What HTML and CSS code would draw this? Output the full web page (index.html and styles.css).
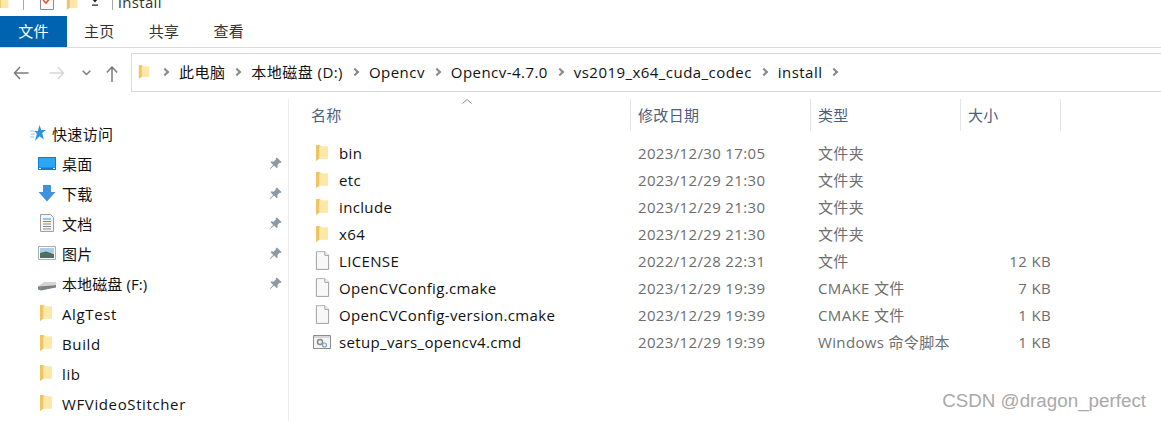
FILE: index.html
```html
<!DOCTYPE html>
<html lang="zh-CN">
<head>
   <meta charset="UTF-8">
   <title>install</title>
   <link rel="stylesheet" href="styles.css">
</head>
<body>
   <svg class="defs" width="0" height="0">
      <defs>
         <symbol id="folder" viewBox="0 0 14 18">
            <path d="M1 1h4l1 1.500h7v12H4L1 17z" fill="#f7dc8a"/>
            <path d="M1 1h3.500v13.500L1 17z" fill="#eec566"/>
            <path d="M4.500 3h8.500v11.500H4.500z" fill="#fde8a8"/>
         </symbol>
         <symbol id="page" viewBox="0 0 16 20">
            <path d="M1.500.5h9l4 4v15h-13z" fill="#f8f8f8" stroke="#9a9a9a"/>
            <path d="M10.500.5v4h4" fill="#fff" stroke="#9a9a9a"/>
         </symbol>
         <symbol id="pin" viewBox="0 0 14 14">
            <path d="M8.500.5l5 5-1 1-1-.3-2.500 2.500.3 2.300-1 1-2.800-2.800L1.500 13 1 12.500l3.500-4L1.700 5.700l1-1 2.300.3L7.500 2.500 7.200 1.500z" fill="#8d99a3"/>
         </symbol>
      </defs>
   </svg>

   <div class="titlebar">
      <svg class="tb-folder" width="12" height="16" viewBox="0 0 12 16"><use href="#folder"/></svg>
      <span class="tb-sep"></span>
      <svg class="tb-check" width="16" height="16" viewBox="0 0 16 16"><path d="M1.500 0v14.500h13V0" fill="#fafafa" stroke="#8c8c8c"/><path d="M4 5l3 3 5-6" fill="none" stroke="#e2562a" stroke-width="1.600"/></svg>
      <svg class="tb-folder2" width="12" height="16" viewBox="0 0 12 16"><use href="#folder"/></svg>
      <svg class="tb-drop" width="8" height="8" viewBox="0 0 8 8"><path d="M1 0h6L4 3.500z M1 5.500h6v1.200H1z" fill="#222"/></svg>
      <span class="tb-sep"></span>
      <span class="tb-title">install</span>
   </div>

   <div class="tabs">
      <div class="tab tab-file">文件</div>
      <div class="tab">主页</div>
      <div class="tab">共享</div>
      <div class="tab">查看</div>
   </div>

   <div class="nav">
      <div class="nav-btns">
         <svg class="btn-back" width="16" height="14" viewBox="0 0 16 14"><path d="M7 1L1.500 7 7 13M2 7h13.500" fill="none" stroke="#7c7c7c" stroke-width="1.500"/></svg>
         <svg class="btn-fwd" width="16" height="14" viewBox="0 0 16 14"><path d="M9 1l5.500 6L9 13M14 7H.5" fill="none" stroke="#d6d6d6" stroke-width="1.500"/></svg>
         <svg class="btn-drop" width="9" height="6" viewBox="0 0 9 6"><path d="M.7.7L4.500 4.500 8.300.7" fill="none" stroke="#7c7c7c" stroke-width="1.500"/></svg>
         <svg class="btn-up" width="12" height="16" viewBox="0 0 12 16"><path d="M.8 6.500L6 1l5.200 5.500M6 1.500V16" fill="none" stroke="#7c7c7c" stroke-width="1.500"/></svg>
      </div>
      <div class="address">
         <svg class="addr-folder" width="12" height="18" viewBox="0 0 14 18"><use href="#folder"/></svg>
         <span class="crumb-sep first"></span><span class="crumb">此电脑</span>
         <span class="crumb-sep"></span><span class="crumb">本地磁盘 (D:)</span>
         <span class="crumb-sep"></span><span class="crumb">Opencv</span>
         <span class="crumb-sep"></span><span class="crumb">Opencv-4.7.0</span>
         <span class="crumb-sep"></span><span class="crumb">vs2019_x64_cuda_codec</span>
         <span class="crumb-sep"></span><span class="crumb">install</span>
         <span class="crumb-sep"></span>
      </div>
   </div>

   <div class="main">
      <div class="sidebar">
         <div class="side-row side-head">
            <svg width="16" height="16" viewBox="0 0 16 16"><path d="M9.500 0l1.800 5H16l-3.800 3 1.500 6.500-4.200-3.200L5 16l1.900-7.500L4 6h3.800z" fill="#2b94dc"/><path d="M0 6h4M1 9h4M0 12h4" stroke="#8ec8ee"/></svg>
            <span>快速访问</span>
         </div>
         <div class="side-row">
            <svg class="side-icon" width="18" height="13" viewBox="0 0 18 13"><path d="M0 0h18v13H0z" fill="#0b7fd6"/><path d="M1 1h16v9.500H1z" fill="#2ba6f2"/><path d="M1 11.500h2M15 11.500h2" stroke="#fff"/></svg>
            <span class="side-name">桌面</span>
            <svg class="pin" width="13" height="13"><use href="#pin"/></svg>
         </div>
         <div class="side-row">
            <svg class="side-icon" width="18" height="17" viewBox="0 0 18 17"><path d="M5 0h8v7h4.500L9 16.500.5 7H5z" fill="#3f92dd"/></svg>
            <span class="side-name">下载</span>
            <svg class="pin" width="13" height="13"><use href="#pin"/></svg>
         </div>
         <div class="side-row">
            <svg class="side-icon" width="18" height="18" viewBox="0 0 18 18"><path d="M2.500.5h10l3 3v14h-13z" fill="#f4f6f8" stroke="#a0a0a0"/><path d="M5 5h8M5 7.500h8" stroke="#3d9ad8"/><path d="M5 10h8M5 12.500h8M5 15h8" stroke="#8a8a8a"/></svg>
            <span class="side-name">文档</span>
            <svg class="pin" width="13" height="13"><use href="#pin"/></svg>
         </div>
         <div class="side-row">
            <svg class="side-icon" width="18" height="14" viewBox="0 0 18 14"><path d="M.5.500h17v13H.5z" fill="#fff" stroke="#adadad"/><path d="M2 2h14v5H2z" fill="#a8cfe8"/><path d="M2 7l6-1.500L16 8v4H2z" fill="#4f6f60"/></svg>
            <span class="side-name">图片</span>
            <svg class="pin" width="13" height="13"><use href="#pin"/></svg>
         </div>
         <div class="side-row">
            <svg class="side-icon disk" width="18" height="10" viewBox="0 0 18 10"><path d="M0 5.500L6 1h12v3.500L3 6.500z" fill="#d4d4d4"/><path d="M0 5.500l15-1 3-.5v2.500L3 9.500 0 8.500z" fill="#7f7f7f"/><path d="M1.500 7h2" stroke="#4fd04f"/></svg>
            <span class="side-name side-disk">本地磁盘 (F:)</span>
            <svg class="pin" width="13" height="13"><use href="#pin"/></svg>
         </div>
         <div class="side-row">
            <svg class="side-icon" width="14" height="18"><use href="#folder"/></svg>
            <span class="side-name side-latin">AlgTest</span>
         </div>
         <div class="side-row">
            <svg class="side-icon" width="14" height="18"><use href="#folder"/></svg>
            <span class="side-name side-latin">Build</span>
         </div>
         <div class="side-row">
            <svg class="side-icon" width="14" height="18"><use href="#folder"/></svg>
            <span class="side-name side-latin">lib</span>
         </div>
         <div class="side-row">
            <svg class="side-icon" width="14" height="18"><use href="#folder"/></svg>
            <span class="side-name side-latin">WFVideoStitcher</span>
         </div>
      </div>

      <div class="files">
         <svg class="sort-caret" width="10" height="5" viewBox="0 0 10 5"><path d="M.5 4.500L5 .5l4.500 4" fill="none" stroke="#8a8a8a"/></svg>
         <div class="file-grid">
            <div class="col-head col-first">名称</div>
            <div class="col-head">修改日期</div>
            <div class="col-head">类型</div>
            <div class="col-head col-last">大小</div>

            <div class="name"><svg class="file-icon" width="14" height="18"><use href="#folder"/></svg>bin</div>
            <div class="cell">2023/12/30 17:05</div><div class="cell">文件夹</div><div class="cell size"></div>

            <div class="name"><svg class="file-icon" width="14" height="18"><use href="#folder"/></svg>etc</div>
            <div class="cell">2023/12/29 21:30</div><div class="cell">文件夹</div><div class="cell size"></div>

            <div class="name"><svg class="file-icon" width="14" height="18"><use href="#folder"/></svg>include</div>
            <div class="cell">2023/12/29 21:30</div><div class="cell">文件夹</div><div class="cell size"></div>

            <div class="name"><svg class="file-icon" width="14" height="18"><use href="#folder"/></svg>x64</div>
            <div class="cell">2023/12/29 21:30</div><div class="cell">文件夹</div><div class="cell size"></div>

            <div class="name"><svg class="file-icon page-icon" width="15" height="19" viewBox="0 0 16 20"><use href="#page"/></svg>LICENSE</div>
            <div class="cell">2022/12/28 22:31</div><div class="cell">文件</div><div class="cell size">12 KB</div>

            <div class="name"><svg class="file-icon page-icon" width="15" height="19" viewBox="0 0 16 20"><use href="#page"/></svg>OpenCVConfig.cmake</div>
            <div class="cell">2023/12/29 19:39</div><div class="cell">CMAKE 文件</div><div class="cell size">7 KB</div>

            <div class="name"><svg class="file-icon page-icon" width="15" height="19" viewBox="0 0 16 20"><use href="#page"/></svg>OpenCVConfig-version.cmake</div>
            <div class="cell">2023/12/29 19:39</div><div class="cell">CMAKE 文件</div><div class="cell size">1 KB</div>

            <div class="name"><svg class="file-icon cmd-icon" width="18" height="14" viewBox="0 0 18 14"><path d="M.5.500h17v13H.5z" fill="#f4f4f4" stroke="#8c8c8c"/><path d="M1 1h16v2H1z" fill="#d8d8d8"/><circle cx="7" cy="7" r="2.500" fill="none" stroke="#8a8a8a" stroke-width="1.500"/><circle cx="11.500" cy="10" r="2" fill="none" stroke="#7f9fc0" stroke-width="1.200"/></svg>setup_vars_opencv4.cmd</div>
            <div class="cell">2023/12/29 19:39</div><div class="cell">Windows 命令脚本</div><div class="cell size">1 KB</div>
         </div>
      </div>
   </div>

   <div class="watermark">CSDN @dragon_perfect</div>
</body>
</html>
```

FILE: styles.css
```css
* {
   margin: 0;
   padding: 0;
   box-sizing: border-box;
}
html, body {
   height: 421px;
   overflow: hidden;
}
body {
   position: relative;
   background-color: #fff;
   color: #111;
   font-family: "Open Sans", "Noto Sans CJK SC", sans-serif;
   font-size: 15px;
   letter-spacing: 0.35px;
}
svg {
   display: block;
   flex: none;
}
.defs {
   position: absolute;
}

/* title strip, cut off by the top of the picture */
.titlebar {
   height: 16px;
   display: flex;
   align-items: flex-end;
   overflow: hidden;
}
.titlebar > svg {
   margin-bottom: 5px;
}
.tb-folder {
   margin-left: -3px;
   margin-right: 14px;
}
.tb-sep {
   width: 1px;
   height: 16px;
   margin-bottom: 6px;
   background-color: #a8a8a8;
}
.tb-check {
   margin-left: 15px;
}
.tb-folder2 {
   margin-left: 11px;
}
.titlebar > .tb-drop {
   margin-left: 13px;
   margin-bottom: 9px;
}
.tb-drop + .tb-sep {
   margin-left: 13px;
}
.tb-title {
   margin-left: 5px;
   line-height: 20px;
   margin-bottom: 4px;
   color: #333;
}

.tabs {
   height: 32px;
   display: flex;
   border-bottom: 1px solid #dadbdc;
}
.tab {
   height: 31px;
   line-height: 30px;
   padding: 0 17px 0 17px;
   color: #333;
}
.tab-file {
   width: 67px;
   padding: 0;
   text-align: center;
   background-color: #0063b1;
   color: #fff;
}

.nav {
   height: 51px;
   padding-top: 5px;
   display: flex;
}
.nav-btns {
   width: 131px;
   height: 39px;
   display: flex;
   align-items: center;
   padding-left: 13px;
}
.btn-fwd {
   margin-left: 20px;
}
.btn-drop {
   margin-left: 17px;
}
.btn-up {
   margin-left: 15px;
   margin-top: 2px;
}
.address {
   flex: 1;
   height: 39px;
   display: flex;
   align-items: center;
   border: 1px solid #d9d9d9;
   border-right: none;
   padding-left: 6px;
   padding-bottom: 2px;
   letter-spacing: 0.45px;
}
.crumb-sep {
   width: 6px;
   height: 6px;
   margin: 0 11px 0 9px;
   border-top: 2px solid #8a8a8a;
   border-right: 2px solid #8a8a8a;
   transform: rotate(45deg);
   flex: none;
}
.crumb-sep.first {
   margin-left: 12px;
}

.main {
   display: flex;
   height: 322px;
}
.sidebar {
   width: 289px;
   flex: none;
   border-right: 1px solid #eeeeee;
   padding-top: 19px;
}
.side-row {
   height: 30px;
   display: flex;
   align-items: center;
   padding-left: 38px;
   padding-right: 6px;
}
.side-head {
   padding-left: 30px;
   gap: 6px;
}
.side-icon {
   margin-right: 6px;
}
.side-row > svg[width="14"] {
   margin-left: 1px;
   margin-right: 9px;
}
.disk {
   margin-top: 5px;
}
.side-name {
   flex: 1;
}
.side-disk {
   letter-spacing: 0.1px;
}
.side-latin {
   letter-spacing: 0.62px;
   padding-top: 2px;
}

.files {
   flex: 1;
   position: relative;
}
.sort-caret {
   position: absolute;
   left: 173px;
   top: 0;
}
.file-grid {
   display: grid;
   grid-template-columns: 341px 180px 150px 101px;
   grid-template-rows: 41px repeat(8, 27px);
   width: 772px;
}
.col-head {
   height: 32px;
   line-height: 32px;
   padding-left: 7px;
   border-left: 1px solid #e5e5e5;
   color: #4c607a;
}
.col-last {
   border-right: 1px solid #e5e5e5;
}
.col-first {
   padding-left: 22px;
   border-left: none;
}
.name {
   display: flex;
   align-items: center;
   padding-left: 26px;
   padding-bottom: 2px;
   height: 27px;
   color: #111;
   white-space: nowrap;
}
.file-icon {
   margin-right: 10px;
}
.page-icon {
   margin-right: 9px;
}
.cmd-icon {
   margin-left: -2px;
   margin-right: 8px;
}
.cell {
   height: 27px;
   line-height: 27px;
   padding-left: 8px;
   color: #6d6d6d;
   white-space: nowrap;
}
.size {
   text-align: right;
   padding-right: 10px;
}

.watermark {
   position: absolute;
   right: 15px;
   top: 389px;
   font-family: "Liberation Sans", sans-serif;
   font-size: 18.8px;
   letter-spacing: 0;
   line-height: 24px;
   color: #a9a9a9;
}
```
